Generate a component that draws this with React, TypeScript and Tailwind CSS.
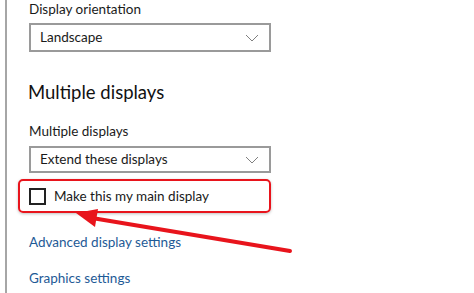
export default function App() {
  const font = { fontFamily: 'Lato, "Noto Sans", sans-serif' };
  return (
    <div className="relative w-[474px] h-[293px] overflow-hidden bg-white" style={font}>
      <div className="ml-[5px] h-full border-l-2 border-[#a6a6a6] pl-[22px] pt-[1px]">
        <div className="text-[13.5px] leading-[17px] text-[#1a1a1a]">Display orientation</div>
        <div className="mt-[5px] w-[242px] h-[29px] border-2 border-[#9a9a9a] flex items-center justify-between pl-[9px] pr-[10px]">
          <span className="text-[13.5px] text-[#1a1a1a]">Landscape</span>
          <svg width="14" height="8" viewBox="0 0 14 8"><path d="M1 1l6 6 6-6" fill="none" stroke="#808080" strokeWidth="1" /></svg>
        </div>
        <div className="mt-[29px] -ml-[1px] text-[18.5px] leading-[22px] text-[#111]">Multiple displays</div>
        <div className="mt-[20px] text-[13.5px] leading-[17px] text-[#1a1a1a]">Multiple displays</div>
        <div className="mt-[6px] w-[242px] h-[27px] border-2 border-[#9a9a9a] flex items-center justify-between pl-[9px] pr-[10px]">
          <span className="text-[13.5px] text-[#1a1a1a]">Extend these displays</span>
          <svg width="14" height="8" viewBox="0 0 14 8"><path d="M1 1l6 6 6-6" fill="none" stroke="#808080" strokeWidth="1" /></svg>
        </div>
        <div className="mt-[6px] -ml-[11px] w-[253px] h-[34px] border-2 border-[#e8141c] rounded-[5px] shadow-[0_1px_3px_rgba(0,0,0,0.25)] flex items-center pl-[9px] gap-[8px]">
          <div className="w-[17px] h-[17px] border-2 border-[#222]" />
          <span className="text-[13.5px] text-[#1a1a1a]">Make this my main display</span>
        </div>
        <div className="mt-[21px] text-[13.5px] leading-[17px] text-[#1e5a96]">Advanced display settings</div>
        <div className="mt-[19px] text-[13.5px] leading-[17px] text-[#1e5a96]">Graphics settings</div>
      </div>
      <svg className="absolute left-0 top-0" width="474" height="293" viewBox="0 0 474 293">
        <line x1="290" y1="251" x2="92" y2="218" stroke="#e8141c" strokeWidth="4" strokeLinecap="round" />
        <polygon points="76,213 98,209 95,227" fill="#e8141c" />
      </svg>
    </div>
  );
}
